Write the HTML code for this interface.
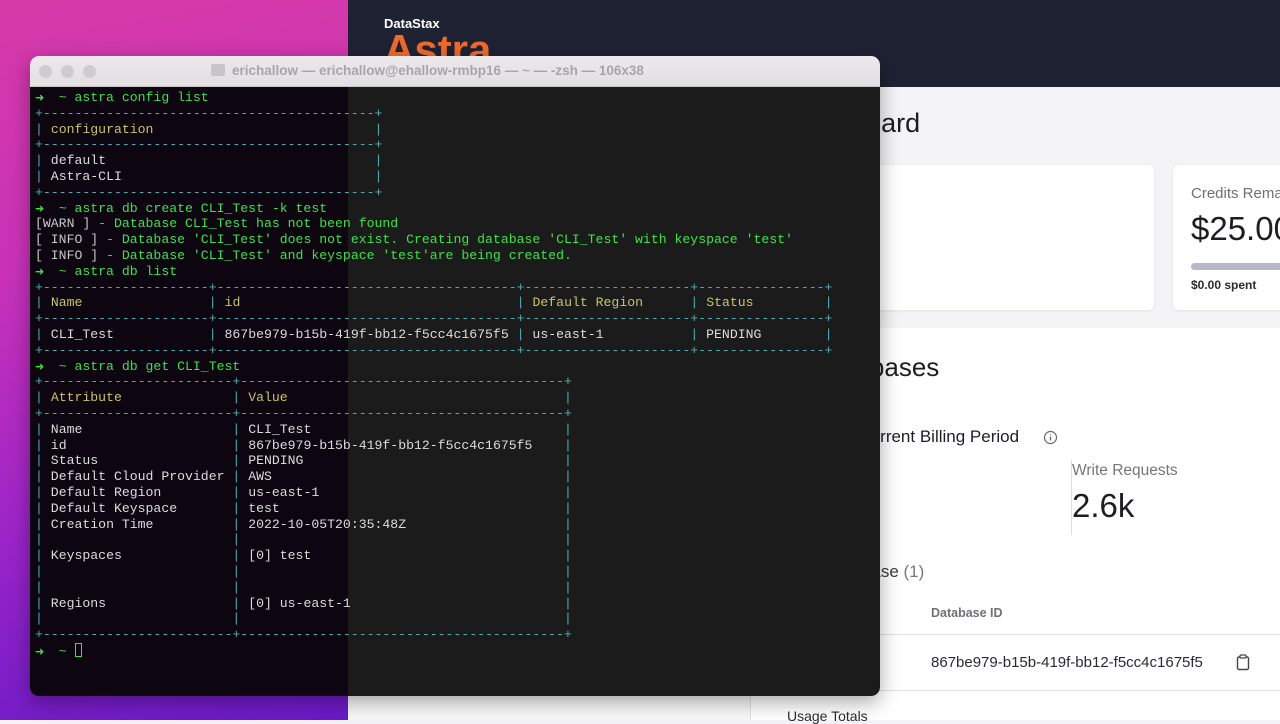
<!DOCTYPE html>
<html><head><meta charset="utf-8"><style>
*{margin:0;padding:0;box-sizing:border-box}
body{width:1280px;height:720px;overflow:hidden;position:relative;font-family:"Liberation Sans",sans-serif;background:#f4f4f6}
.a{position:absolute}
#bgl{left:0;top:0;width:348px;height:720px;background:linear-gradient(170deg,#d73aa8 0%,#c832b8 35%,#9a24c8 70%,#6a1ac8 100%)}
#hdr{left:348px;top:0;width:932px;height:87px;background:#1f2233}
#term{left:30px;top:56px;width:850px;height:640px;border-radius:9px;overflow:hidden;box-shadow:0 6px 20px rgba(0,0,0,.35)}
#tb{left:0;top:0;width:850px;height:31px;background:linear-gradient(#ece8ec,#e2dee2);border-bottom:1px solid #c8c4c8}
.dot{top:9px;width:13px;height:13px;border-radius:50%;background:#cfcbcf}
#tl{left:0;top:31px;width:318px;height:609px;background:#0d0510}
#tr{left:318px;top:31px;width:532px;height:609px;background:#1b1b1b}
pre{position:absolute;left:5px;top:34px;font-family:"Liberation Mono",monospace;font-size:13.17px;line-height:15.8px;color:#dcdcdc;white-space:pre}
.g{color:#3fe04a}.y{color:#c9c26a}.c{color:#4aaeb4}.w{color:#c8c8c8}
.ar{color:#3fe04a;font-family:"DejaVu Sans",sans-serif;font-size:11px;font-weight:bold;display:inline-block;width:7.9px}
.card{background:#fff;border-radius:6px;box-shadow:0 1px 3px rgba(0,0,0,.08)}
</style></head><body>
<div class="a" id="bgl"></div>
<div class="a" id="hdr">
 <div class="a" style="left:36px;top:16px;color:#fff;font-weight:bold;font-size:13px">DataStax</div>
 <div class="a" style="left:36px;top:26px;color:#f06a2a;font-weight:bold;font-size:42px;line-height:48px">Astra</div>
</div>
<div class="a" style="left:348px;top:696px;width:402px;height:24px;background:#f8f8f8"></div>
<div class="a" style="left:750px;top:87px;width:1px;height:633px;background:#e2e2e6"></div>
<div class="a" style="left:788px;top:108px;font-size:27px;color:#1d1d24">Dashboard</div>
<div class="a card" style="left:760px;top:165px;width:394px;height:145px"></div>
<div class="a card" style="left:1173px;top:165px;width:130px;height:145px">
 <div class="a" style="left:18px;top:20px;font-size:15px;color:#6f6f78;white-space:nowrap">Credits Remaining</div>
 <div class="a" style="left:18px;top:45px;font-size:33px;color:#1d1d24;white-space:nowrap">$25.00</div>
 <div class="a" style="left:18px;top:98px;width:120px;height:7px;border-radius:4px;background:#b8b8c8"></div>
 <div class="a" style="left:18px;top:113px;font-size:12px;font-weight:bold;color:#2a2a33;white-space:nowrap">$0.00 spent</div>
</div>
<div class="a" style="left:751px;top:328px;width:529px;height:392px;background:#fff"></div>
<div class="a" style="left:815px;top:352px;font-size:26px;color:#1d1d24">Databases</div>
<div class="a" style="left:780px;top:427px;font-size:17px;color:#1d1d24">Usage for Current Billing Period</div>
<svg class="a" style="left:1043px;top:430px" width="15" height="15" viewBox="0 0 15 15"><circle cx="7.5" cy="7.5" r="6" fill="none" stroke="#666" stroke-width="1.2"/><path d="M7.5 6.5v4M7.5 4.3v.8" stroke="#666" stroke-width="1.3"/></svg>
<div class="a" style="left:1071px;top:460px;width:1px;height:75px;background:#ddd"></div>
<div class="a" style="left:1072px;top:462px;font-size:15.5px;color:#75757d">Write Requests</div>
<div class="a" style="left:1072px;top:487px;font-size:33px;color:#1d1d24">2.6k</div>
<div class="a" style="left:775px;top:562px;font-size:17px;color:#3a3a44">Active Database <span style="color:#777">(1)</span></div>
<div class="a" style="left:931px;top:606px;font-size:12.5px;font-weight:bold;color:#6f6f78">Database ID</div>
<div class="a" style="left:751px;top:634px;width:529px;height:1px;background:#e2e2e6"></div>
<div class="a" style="left:931px;top:654px;font-size:15px;color:#2a2a33">867be979-b15b-419f-bb12-f5cc4c1675f5</div>
<svg class="a" style="left:1236px;top:654px" width="14" height="17" viewBox="0 0 14 17"><rect x="1.5" y="3" width="11" height="12.5" rx="1.5" fill="none" stroke="#444" stroke-width="1.4"/><rect x="4" y="1" width="6" height="3" rx="1" fill="#fff" stroke="#444" stroke-width="1.2"/></svg>
<div class="a" style="left:751px;top:690px;width:529px;height:1px;background:#e2e2e6"></div>
<div class="a" style="left:787px;top:708px;font-size:14px;color:#2a2a33">Usage Totals</div>

<div class="a" id="term">
 <div class="a" id="tb">
  <div class="a dot" style="left:9px"></div><div class="a dot" style="left:31px"></div><div class="a dot" style="left:53px"></div>
  <div class="a" style="left:181px;top:8px;width:14px;height:12px;background:#c8c4c8;border-radius:2px"></div>
  <div class="a" style="left:202px;top:7px;font-size:13.5px;font-weight:bold;color:#a8a4a8;white-space:nowrap">erichallow — erichallow@ehallow-rmbp16 — ~ — -zsh — 106x38</div>
 </div>
 <div class="a" id="tl"></div><div class="a" id="tr"></div>
<pre><span class="ar">➜</span>  <span class="g">~ astra config list</span>
<span class="c">+------------------------------------------+</span>
<span class="c">|</span> <span class="y">configuration</span>                            <span class="c">|</span>
<span class="c">+------------------------------------------+</span>
<span class="c">|</span> default                                  <span class="c">|</span>
<span class="c">|</span> Astra-CLI                                <span class="c">|</span>
<span class="c">+------------------------------------------+</span>
<span class="ar">➜</span>  <span class="g">~ astra db create CLI_Test -k test</span>
<span class="w">[WARN ]</span><span class="g"> - Database CLI_Test has not been found</span>
<span class="w">[ INFO ]</span><span class="g"> - Database 'CLI_Test' does not exist. Creating database 'CLI_Test' with keyspace 'test'</span>
<span class="w">[ INFO ]</span><span class="g"> - Database 'CLI_Test' and keyspace 'test'are being created.</span>
<span class="ar">➜</span>  <span class="g">~ astra db list</span>
<span class="c">+---------------------+--------------------------------------+---------------------+----------------+</span>
<span class="c">|</span> <span class="y">Name</span>                <span class="c">|</span> <span class="y">id</span>                                   <span class="c">|</span> <span class="y">Default Region</span>      <span class="c">|</span> <span class="y">Status</span>         <span class="c">|</span>
<span class="c">+---------------------+--------------------------------------+---------------------+----------------+</span>
<span class="c">|</span> CLI_Test            <span class="c">|</span> 867be979-b15b-419f-bb12-f5cc4c1675f5 <span class="c">|</span> us-east-1           <span class="c">|</span> PENDING        <span class="c">|</span>
<span class="c">+---------------------+--------------------------------------+---------------------+----------------+</span>
<span class="ar">➜</span>  <span class="g">~ astra db get CLI_Test</span>
<span class="c">+------------------------+-----------------------------------------+</span>
<span class="c">|</span> <span class="y">Attribute</span>              <span class="c">|</span> <span class="y">Value</span>                                   <span class="c">|</span>
<span class="c">+------------------------+-----------------------------------------+</span>
<span class="c">|</span> Name                   <span class="c">|</span> CLI_Test                                <span class="c">|</span>
<span class="c">|</span> id                     <span class="c">|</span> 867be979-b15b-419f-bb12-f5cc4c1675f5    <span class="c">|</span>
<span class="c">|</span> Status                 <span class="c">|</span> PENDING                                 <span class="c">|</span>
<span class="c">|</span> Default Cloud Provider <span class="c">|</span> AWS                                     <span class="c">|</span>
<span class="c">|</span> Default Region         <span class="c">|</span> us-east-1                               <span class="c">|</span>
<span class="c">|</span> Default Keyspace       <span class="c">|</span> test                                    <span class="c">|</span>
<span class="c">|</span> Creation Time          <span class="c">|</span> 2022-10-05T20:35:48Z                    <span class="c">|</span>
<span class="c">|</span>                        <span class="c">|</span>                                         <span class="c">|</span>
<span class="c">|</span> Keyspaces              <span class="c">|</span> [0] test                                <span class="c">|</span>
<span class="c">|</span>                        <span class="c">|</span>                                         <span class="c">|</span>
<span class="c">|</span>                        <span class="c">|</span>                                         <span class="c">|</span>
<span class="c">|</span> Regions                <span class="c">|</span> [0] us-east-1                           <span class="c">|</span>
<span class="c">|</span>                        <span class="c">|</span>                                         <span class="c">|</span>
<span class="c">+------------------------+-----------------------------------------+</span>
<span class="ar">➜</span>  <span class="g">~</span> <span style="display:inline-block;width:7px;height:14px;border:1px solid #3fe04a;vertical-align:-2px"></span></pre>
</div>
</body></html>
